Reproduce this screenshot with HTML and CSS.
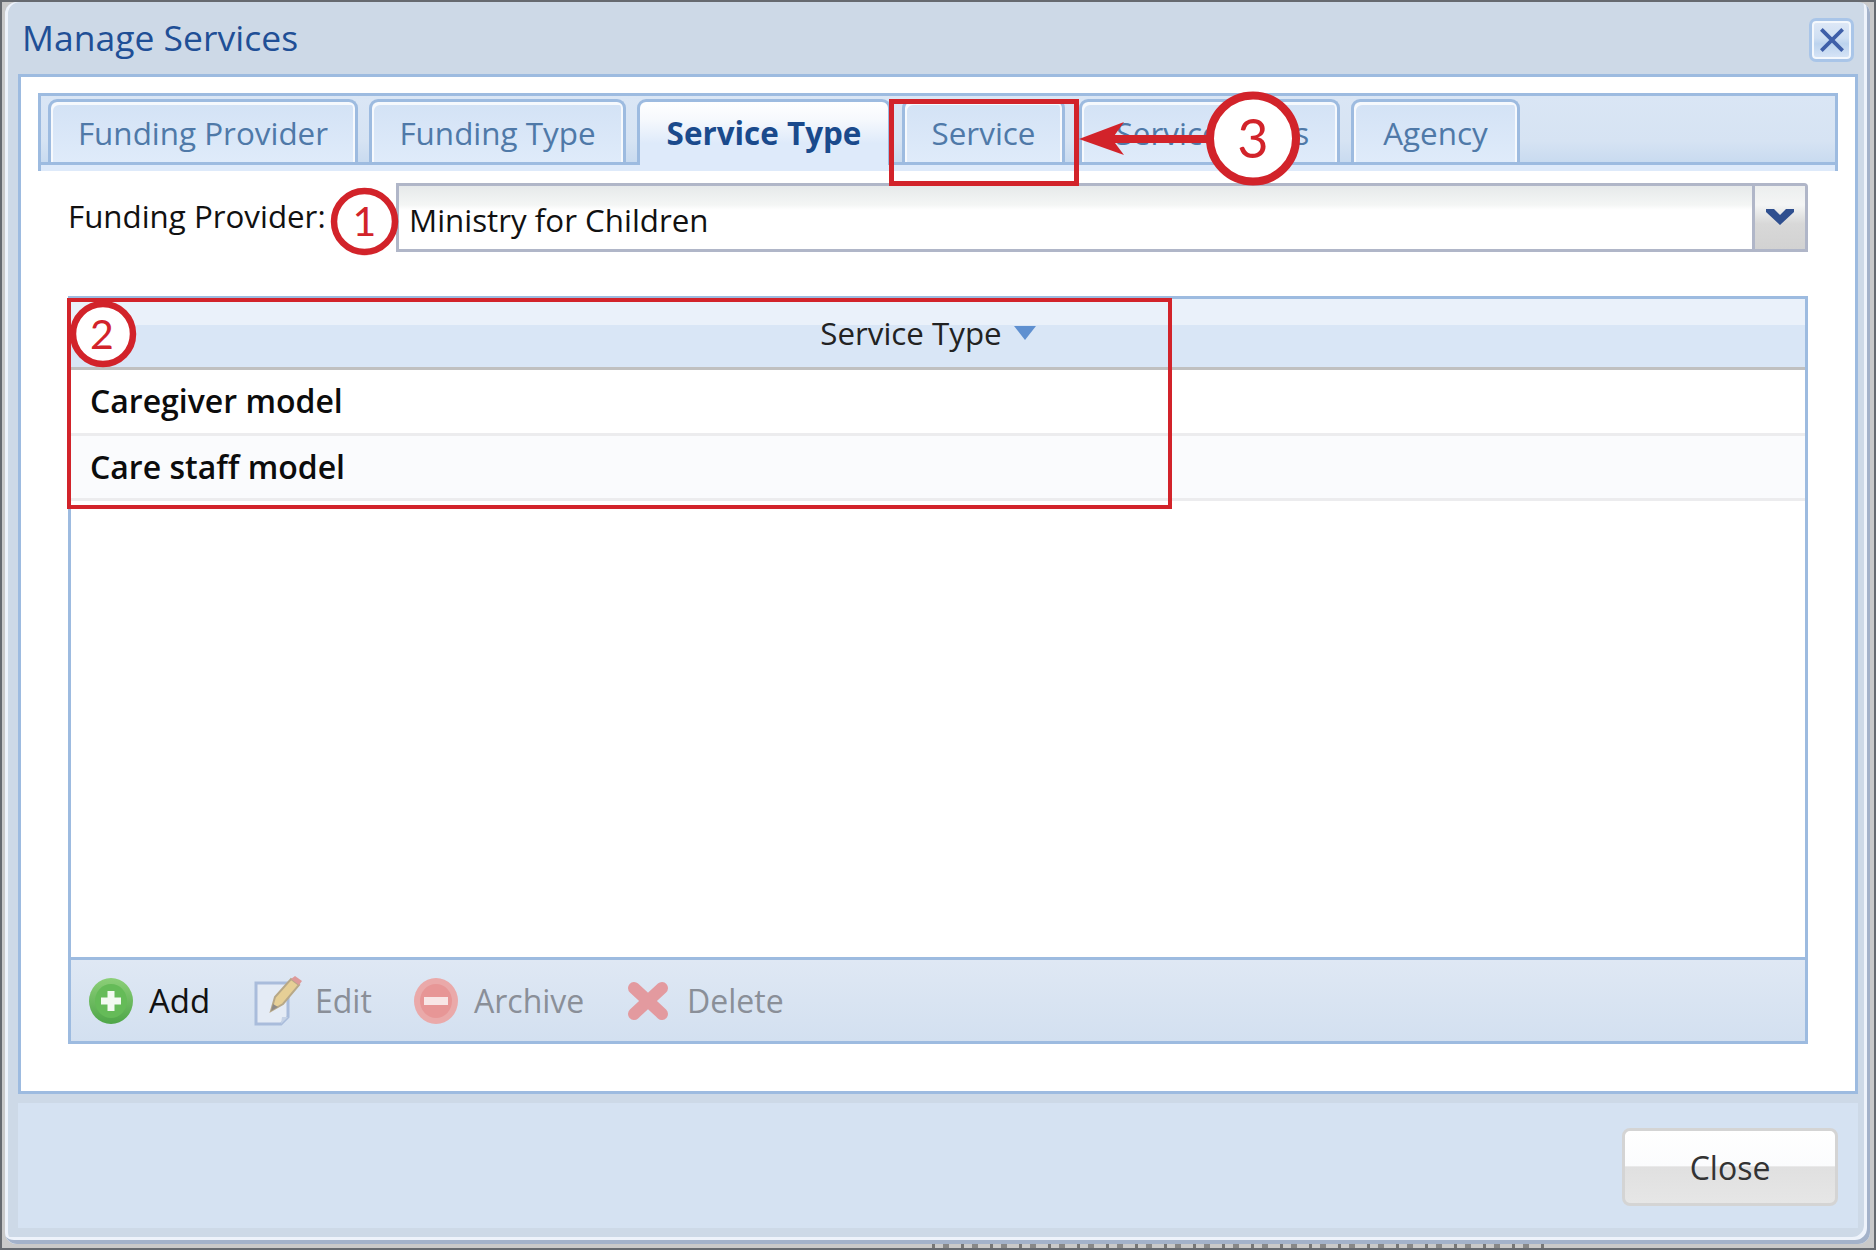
FILE: index.html
```html
<!DOCTYPE html>
<html lang="en">
<head>
<meta charset="utf-8">
<title>Manage Services</title>
<link rel="stylesheet" href="styles.css">
</head>
<body>
<div class="window">
  <header class="titlebar">
    <h1 class="title">Manage Services</h1>
    <button class="close-x" aria-label="Close">
      <svg viewBox="0 0 30 30" width="28" height="28"><path d="M5 5 L25 25 M25 5 L5 25" stroke="#3f5fa8" stroke-width="4" stroke-linecap="square" fill="none"/></svg>
    </button>
  </header>
  <main class="panel">
    <div class="tabbar">
      <nav class="tabs">
        <a class="tab tab-a">Funding Provider</a>
        <a class="tab tab-b">Funding Type</a>
        <a class="tab tab-c active">Service Type</a>
        <a class="tab tab-d">Service</a>
        <a class="tab tab-e">Service Items</a>
        <a class="tab tab-f">Agency</a>
      </nav>
      <div class="tabstrip"></div>
    </div>
    <div class="content">
      <div class="filter">
        <label class="filter-label">Funding Provider:</label>
        <div class="combo">
          <span class="combo-value">Ministry for Children</span>
          <span class="combo-btn">
            <svg viewBox="0 0 30 18" width="30" height="18"><path d="M1 2 L9 2 L15 8 L21 2 L29 2 L29 5 L15 18 L1 5 Z" fill="#2f4f8f"/></svg>
          </span>
        </div>
      </div>
      <section class="grid">
        <div class="grid-head">
          <span>Service Type</span>
          <svg class="sort" viewBox="0 0 22 14" width="22" height="14"><path d="M0 0 H22 L11 14 Z" fill="#5f90d0"/></svg>
        </div>
        <div class="row">Caregiver model</div>
        <div class="row alt">Care staff model</div>
        <div class="grid-empty"></div>
        <div class="toolbar">
          <span class="tool tool-add">
            <svg viewBox="0 0 44 46" width="44" height="46">
              <defs><linearGradient id="g1" x1="0" y1="0" x2="0" y2="1"><stop offset="0" stop-color="#8ccf78"/><stop offset="1" stop-color="#4ea648"/></linearGradient></defs>
              <ellipse cx="22" cy="23" rx="22" ry="23" fill="url(#g1)"/>
              <ellipse cx="22" cy="23" rx="16" ry="17" fill="#65bb58"/>
              <path d="M22 13 V33 M12 23 H32" stroke="#f2faf0" stroke-width="7"/>
            </svg>
            Add
          </span>
          <span class="tool tool-edit off">
            <svg viewBox="0 0 50 50" width="50" height="50">
              <path d="M2 7 H34 V41 L27 48 H2 Z" fill="#e4ebf5" stroke="#a9bcdb" stroke-width="3"/>
              <path d="M27 48 L28 41 H34 Z" fill="#c5d2e6"/>
              <path d="M17 35 L21 21 L37 3 L45 9 L29 28 Z" fill="#e6cf96" stroke="#b7a888" stroke-width="2"/>
              <path d="M37 3 L41 0 L48 5 L45 9 Z" fill="#dd9a9a"/>
              <path d="M17 35 L19 28 L24 31 Z" fill="#8e8a86"/>
            </svg>
            Edit
          </span>
          <span class="tool tool-archive off">
            <svg viewBox="0 0 44 46" width="44" height="46">
              <ellipse cx="22" cy="23" rx="22" ry="23" fill="#eaa9a9"/>
              <ellipse cx="22" cy="23" rx="16" ry="17" fill="#e79696"/>
              <rect x="10" y="19" width="24" height="8" fill="#f8e6e6"/>
            </svg>
            Archive
          </span>
          <span class="tool tool-delete off">
            <svg viewBox="0 0 42 40" width="42" height="40">
              <path d="M7 7 L35 33 M35 7 L7 33" stroke="#e39a9f" stroke-width="12" stroke-linecap="round"/>
            </svg>
            Delete
          </span>
        </div>
      </section>
    </div>
  </main>
  <footer class="footer">
    <button class="btn-close">Close</button>
  </footer>
</div>
<div class="behind"><span class="behind-ink"></span></div>

<svg class="annotations" viewBox="0 0 1876 1250" width="1876" height="1250">
  <rect class="mark" x="69" y="300" width="1101" height="207"/>
  <rect class="mark" x="891.5" y="101.5" width="185" height="82"/>
  <path class="arrow-shaft" d="M1110 139 H1215"/>
  <path class="arrow-head" d="M1079 139 L1124 122 L1112 139 L1124 155 Z"/>
  <circle class="ring" cx="364.5" cy="221.5" r="30.5"/>
  <circle class="ring" cx="103" cy="334" r="30"/>
  <circle class="ring ring-big" cx="1253" cy="138.5" r="43"/>
  <text class="num" x="364.5" y="236">1</text>
  <text class="num" x="102" y="349">2</text>
  <text class="num num-big" x="1253" y="158">3</text>
</svg>
</body>
</html>
```
FILE: styles.css
```css
* { box-sizing: border-box; }
html, body { margin: 0; padding: 0; }
body {
  width: 1876px;
  height: 1250px;
  overflow: hidden;
  position: relative;
  display: flex;
  flex-direction: column;
  padding: 2px 2px 2px 2px;
  background: #c9c9c9;
  box-shadow: inset 0 0 0 2px #666a70;
  font-family: "Open Sans", "Noto Sans", sans-serif;
  color: #111;
}
.window {
  margin: 0 4px 0 3px;
  height: 1242px;
  padding: 0 12px 16px 13px;
  background: #cdd9e7;
  border-radius: 12px;
  box-shadow: inset -3px -4px 0 #a3b2ca, inset -6px -7px 0 #eef3fb, inset 3px 0 0 #eef3fb;
  display: flex;
  flex-direction: column;
}
.titlebar {
  height: 72px;
  display: flex;
  justify-content: space-between;
  align-items: flex-start;
  padding: 0 4px 0 4px;
}
.title {
  margin: 14px 0 0;
  font-size: 35.5px;
  line-height: 42px;
  font-weight: 400;
  color: #1f4f96;
}
.close-x {
  margin-top: 16px;
  width: 45px;
  height: 44px;
  padding: 0;
  border: 3px solid #a9c5e8;
  border-radius: 7px;
  background: linear-gradient(#dfe9f7 0, #cfdff3 45%, #bcd3ee 60%, #d9e6f7 100%);
  box-shadow: inset 0 0 0 2px #f4f8fd;
  display: flex;
  align-items: center;
  justify-content: center;
}
.panel {
  height: 1020px;
  border: 3px solid #9dbbe0;
  background: #fff;
  padding-top: 16px;
}
.tabbar {
  margin: 0 17px;
  height: 78px;
  border: 3px solid #9dbbe0;
  border-bottom: 0;
  background: linear-gradient(#dae6f5, #d6e3f3 60%, #c6d9ef 94%);
  display: flex;
  flex-direction: column;
  align-items: stretch;
}
.tabs {
  height: 69px;
  flex: none;
  padding: 3px 0 0 7px;
  display: flex;
  gap: 11px;
  border-bottom: 3px solid #9dbbe0;
}
.tabstrip { height: 6px; flex: none; background: #deeafa; }
.tab {
  height: 63px;
  border: 3px solid #9dbbe0;
  border-bottom: 0;
  border-radius: 9px 9px 0 0;
  background: linear-gradient(#d3e2f5, #dfebfa);
  box-shadow: inset 2px 3px 0 #f6f9fd, inset -2px 0 0 #f6f9fd;
  color: #4f79a8;
  font-size: 31.4px;
  line-height: 62px;
  text-align: center;
  white-space: nowrap;
}
.tab-a { width: 310px; }
.tab-b { width: 257px; }
.tab-c { width: 254px; }
.tab-d { width: 163px; margin-right: 3px; }
.tab-e { width: 261px; padding-left: 6px; }
.tab-f { width: 169px; }
.tab.active {
  height: 72px;
  background: linear-gradient(#fff 0, #f6f9fd 25%, #deeafa 60%);
  box-shadow: none;
  border-bottom: 0;
  color: #1a4a8c;
  font-weight: 700;
}
.content { padding: 0 47px; }
.filter {
  margin-top: 12px;
  height: 69px;
  display: flex;
}
.filter-label {
  width: 328px;
  font-size: 31.3px;
  line-height: 66px;
  color: #111;
  white-space: nowrap;
}
.combo {
  flex: 1;
  display: flex;
  border: 3px solid #b0b6c8;
  border-radius: 0 4px 0 0;
  background: linear-gradient(#e6e9ea 0, #f4f6f5 30%, #fff 38%);
}
.combo-value {
  flex: 1;
  padding-left: 10px;
  font-size: 31.3px;
  line-height: 68px;
  color: #111;
}
.combo-btn {
  width: 53px;
  border-left: 3px solid #b0b6c8;
  background: linear-gradient(#eceeee 0, #f4f5f5 30%, #d8d8d8 60%, #d2d2d2 100%);
  display: flex;
  justify-content: center;
  padding-top: 21px;
}
.grid {
  margin-top: 44px;
  height: 748px;
  border: 3px solid #9dbbe0;
  display: flex;
  flex-direction: column;
}
.grid-head {
  height: 71px;
  flex: none;
  border-bottom: 3px solid #c0c0c0;
  background: linear-gradient(#eaf1fa 0 26px, #d9e6f6 26px);
  display: flex;
  justify-content: center;
  align-items: center;
  gap: 12px;
  padding-right: 20px;
  font-size: 31.3px;
  color: #222;
}
.row {
  height: 66px;
  flex: none;
  border-bottom: 3px solid #ececee;
  padding: 0 19px;
  font-size: 32px;
  font-weight: 600;
  line-height: 62px;
  color: #0c0c0c;
}
.row.alt { height: 65px; background: #fafbfd; }
.grid-empty { flex: 1; }
.toolbar {
  height: 84px;
  flex: none;
  border-top: 3px solid #9dbbe0;
  background: linear-gradient(#dfe8f4, #d3e0f0);
  display: flex;
  align-items: center;
  padding-left: 18px;
  font-size: 32px;
}
.tool { display: flex; align-items: center; }
.tool-add { gap: 16px; width: 165px; font-size: 33px; }
.tool-edit { gap: 11px; width: 160px; }
.tool-archive { gap: 16px; width: 213px; }
.tool-delete { gap: 18px; }
.off { color: #8a8f98; }
.footer {
  margin-top: 9px;
  height: 125px;
  background: #d5e2f2;
  display: flex;
  justify-content: flex-end;
  padding: 25px 20px 0 0;
}
.btn-close {
  width: 216px;
  height: 78px;
  border: 3px solid #d4d4d4;
  border-radius: 8px;
  background: linear-gradient(#fff 0, #fbfcfd 48%, #e0e0e0 50%, #e6e6e6 100%);
  font-family: inherit;
  font-size: 32px;
  color: #333;
  padding: 0;
}
.behind {
  height: 4px;
  padding-left: 930px;
  overflow: hidden;
}
.behind-ink {
  display: block;
  width: 620px;
  height: 4px;
  background: repeating-linear-gradient(90deg, #777 0 3px, transparent 3px 11px, #888 11px 17px, transparent 17px 29px);
}
.annotations {
  position: absolute;
  left: 0;
  top: 0;
  pointer-events: none;
}
.mark { fill: none; stroke: #d2232a; stroke-width: 4; }
.mark + .mark { stroke-width: 5; }
.ring { fill: #fff; stroke: #d2232a; stroke-width: 6.5; }
.ring-big { stroke-width: 8; }
.arrow-shaft { stroke: #d2232a; stroke-width: 8; fill: none; }
.arrow-head { fill: #d2232a; }
.num {
  font-family: "Lato", "Open Sans", sans-serif;
  font-size: 41px;
  fill: #d2232a;
  text-anchor: middle;
}
.num-big { font-size: 54px; }
```
